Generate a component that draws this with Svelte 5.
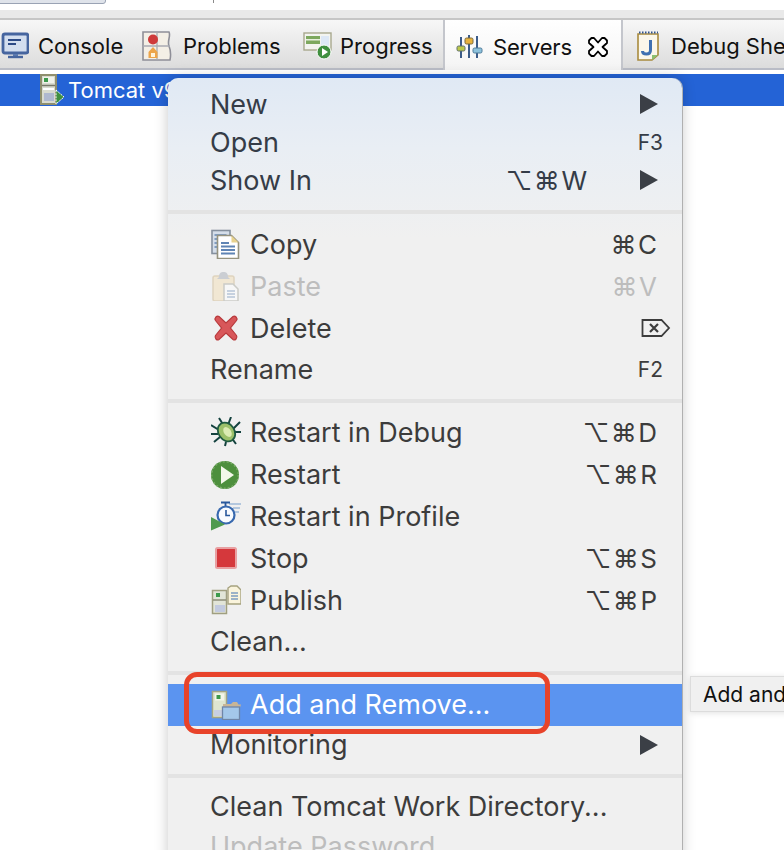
<script>
  const tabs = [
    { id: "console", label: "Console" },
    { id: "problems", label: "Problems" },
    { id: "progress", label: "Progress" },
    { id: "servers", label: "Servers", active: true },
    { id: "debug", label: "Debug Shell" },
  ];

  const groups = [
    [
      { label: "New", arrow: true },
      { label: "Open", fn: "F3" },
      { label: "Show In", keys: "⌥⌘W", arrow: true },
    ],
    [
      { label: "Copy", icon: "copy", keys: "⌘C" },
      { label: "Paste", icon: "paste", keys: "⌘V", off: true },
      { label: "Delete", icon: "delete", del: true },
      { label: "Rename", fn: "F2", tall: true },
    ],
    [
      { label: "Restart in Debug", icon: "bug", keys: "⌥⌘D" },
      { label: "Restart", icon: "restart", keys: "⌥⌘R" },
      { label: "Restart in Profile", icon: "profile" },
      { label: "Stop", icon: "stop", keys: "⌥⌘S" },
      { label: "Publish", icon: "publish", keys: "⌥⌘P" },
      { label: "Clean...", tall: true },
    ],
    [
      { label: "Add and Remove...", icon: "add", selected: true },
      { label: "Monitoring", arrow: true },
    ],
    [
      { label: "Clean Tomcat Work Directory..." },
      { label: "Update Password", off: true, low: true },
    ],
  ];
</script>

{#snippet icon(name)}
  <svg class="icon" width="30" height="30" viewBox="0 0 30 30">
    {#if name === "copy"}
      <rect x="1" y="1.500" width="18" height="23" fill="#d5deea" stroke="#85909e" stroke-width="1.600" />
      <path d="M3.500 6h12M3.500 10h12M3.500 14h8M3.500 18h8" stroke="#6488b4" stroke-width="1.600" />
      <path d="M6.500 6.500h14l7 7v16h-21z" fill="#fff" stroke="#96937f" stroke-width="1.600" />
      <path d="M20.500 6.500l7 7h-7z" fill="#e8d28e" />
      <path d="M10 14h8M10 17.500h14M10 21h14M10 24.500h14" stroke="#5f84b4" stroke-width="1.800" />
    {:else if name === "paste"}
      <g opacity="0.5">
        <rect x="2" y="5" width="21" height="25" rx="2" fill="#f2dfb8" stroke="#cfb98f" stroke-width="1.500" />
        <path d="M8 6c0-4 2-5 4.500-5S17 2 17 6l2 2H6z" fill="#a7adb8" />
        <path d="M13 13h9l5 5v12H13z" fill="#fff" stroke="#a8a9a0" stroke-width="1.500" />
        <path d="M16 20h8M16 23h8M16 26h8" stroke="#7d9cc0" stroke-width="1.500" />
      </g>
    {:else if name === "delete"}
      <path d="M8 3.500l7 6.500 7-6.500c2-1.500 5 1.500 3.500 4l-6 7.500 6 7.500c1.500 2.500-1.500 5.500-3.500 4l-7-6.500-7 6.500c-2 1.500-5-1.500-3.500-4l6-7.500-6-7.500C3 5 6 2 8 3.500z" fill="#d8575a" stroke="#b83a3c" stroke-width="1.200" />
    {:else if name === "bug"}
      <g stroke="#14423f" stroke-width="2" fill="none">
        <path d="M8 1l5 8M20 0l-3 8M0 8l8 5M29 5l-7 7M0 17h7M30 15h-7M3 25l6-5M25 27l-5-7M14 29l1-4" />
      </g>
      <ellipse cx="15.500" cy="15" rx="8" ry="10" transform="rotate(-35 15.500 15)" fill="#9cc06a" stroke="#1f5a40" stroke-width="1.800" />
      <ellipse cx="16.500" cy="15" rx="3.500" ry="5.500" transform="rotate(-35 16.500 15)" fill="#dcebb3" />
    {:else if name === "restart"}
      <circle cx="14" cy="16" r="14" fill="#4d8f3d" />
      <circle cx="14" cy="16" r="13.300" fill="none" stroke="#7bab68" stroke-width="1.400" stroke-dasharray="2 2" />
      <path d="M10 7l13 9-13 9z" fill="#f4f8ea" />
    {:else if name === "profile"}
      <path d="M18 3h12M22 7h7M24 11h4" stroke="#9fb9d8" stroke-width="1.300" />
      <path d="M10 1.500h9M14.500 2v4" stroke="#28589c" stroke-width="1.800" />
      <circle cx="15" cy="14" r="8.500" fill="#f8fbff" stroke="#3768ae" stroke-width="2.200" />
      <path d="M15 9v5.500h4" fill="none" stroke="#28589c" stroke-width="1.600" />
      <path d="M0 16l14 7.500-14 6z" fill="#4f9a4f" />
    {:else if name === "stop"}
      <rect x="5" y="5" width="20" height="20" rx="1.500" fill="#d5383c" stroke="#e8a0a2" stroke-width="2" />
    {:else if name === "publish"}
      <rect x="1.500" y="5.500" width="14" height="23" fill="#e2e5d8" stroke="#a09f80" stroke-width="1.500" />
      <rect x="5" y="8" width="4" height="4" fill="#3c9a4c" />
      <path d="M2 15h13" stroke="#8d8d78" stroke-width="1.500" />
      <rect x="4" y="20" width="10" height="7" fill="#c2cadf" />
      <path d="M17 3l3-2h6l4 4v14h-13z" fill="#faf4dc" stroke="#a6a27f" stroke-width="1.400" />
      <path d="M20 8h7M20 11h7M20 14h7" stroke="#7d9cc0" stroke-width="1.300" />
    {:else if name === "add"}
      <rect x="1.500" y="1.500" width="14" height="26" fill="#dfe6d0" stroke="#a3a583" stroke-width="1.500" />
      <rect x="4" y="3.500" width="9" height="7" fill="#f2f5ea" />
      <rect x="5.500" y="5" width="4" height="4" fill="#3c9a4c" />
      <rect x="3" y="20" width="11" height="6" fill="#c7cfe2" />
      <path d="M12 14h8l2-2h4l1.500 2.500H30l-1 3H12z" fill="#c8b596" />
      <rect x="11.500" y="17" width="17" height="12.500" fill="#a4c8ea" stroke="#6f86a8" stroke-width="1.300" />
    {/if}
  </svg>
{/snippet}

{#snippet tabIcon(id)}
  {#if id === "console"}
    <svg class="tab-icon" width="28" height="28" viewBox="0 0 28 28">
      <rect x="2" y="2" width="25" height="19" rx="2" fill="#d3deef" stroke="#46659f" stroke-width="2.800" />
      <path d="M7 8h13M7 12h8" stroke="#2c4a86" stroke-width="2" />
      <path d="M12 22h5v2h-5z" fill="#5d7bb0" />
      <path d="M7 25h15" stroke="#46659f" stroke-width="2.400" />
    </svg>
  {:else if id === "problems"}
    <svg class="tab-icon" width="30" height="30" viewBox="0 0 30 30">
      <path d="M1 1h26c2 4-2 9 0 14s2 9 1 14H1z" fill="#f4efe6" stroke="#8f8f98" stroke-width="1.600" />
      <path d="M1 15h27M15 1v28" stroke="#a9abb2" stroke-width="1.300" />
      <circle cx="11" cy="8.500" r="5" fill="#cf3a3a" />
      <path d="M11 16l4.500 5v6h-9v-6z" fill="#eda54a" />
      <rect x="9" y="22" width="4" height="4" fill="#fff4dc" />
    </svg>
  {:else if id === "progress"}
    <svg class="tab-icon" width="30" height="28" viewBox="0 0 30 28">
      <rect x="1" y="1" width="27" height="17" fill="#f3f4f0" stroke="#a8a88e" stroke-width="1.400" />
      <rect x="3" y="4" width="14" height="8" fill="#7da85e" />
      <rect x="3" y="7" width="14" height="1.500" fill="#e8f0de" />
      <rect x="18" y="4" width="8" height="10" fill="#dde8f6" />
      <circle cx="21" cy="20" r="7" fill="#3f8f3f" stroke="#fff" />
      <path d="M19 16l6 4-6 4z" fill="#fff" />
    </svg>
  {:else if id === "servers"}
    <svg class="tab-icon" width="28" height="26" viewBox="0 0 28 26">
      <path d="M5 3v21M13 1v23M21 2v22" stroke="#3b5b88" stroke-width="2" />
      <rect x="1" y="12" width="8" height="5" rx="1.500" fill="#bcc94a" stroke="#5f6e6e" />
      <rect x="9" y="4" width="8" height="6" rx="1.500" fill="#e7b23e" stroke="#7a6a3e" />
      <rect x="17" y="14" width="9" height="5" rx="1.500" fill="#8dc2dc" stroke="#4f7a98" />
    </svg>
  {:else}
    <svg class="tab-icon" width="24" height="30" viewBox="0 0 24 30">
      <path d="M2 3h20v21l-6 5H2z" fill="#fbf7ea" stroke="#a88a3e" stroke-width="1.600" />
      <path d="M16 29v-5h6z" fill="#8cc070" />
      <path d="M3 1.500h19" stroke="#33558c" stroke-width="2" stroke-dasharray="1.500 1.500" />
      <path d="M14.500 9v10c0 3-2 4-4 4s-4-1-4-3" fill="none" stroke="#3f70b0" stroke-width="3" />
    </svg>
  {/if}
{/snippet}

{#snippet closeX()}
  <svg class="close" width="22" height="22" viewBox="0 0 22 22">
    <path d="M2 4.500L4.500 2 7 2l4 4.500L15 2h2.500L20 4.500V7l-4.500 4 4.500 4v2.500L17.500 20H15l-4-4.500L7 20H4.500L2 17.500V15l4.500-4L2 7z" fill="#fff" stroke="#000" stroke-width="1.800" stroke-linejoin="round" />
  </svg>
{/snippet}

<div class="page">
  <div class="topstrip">
    <span class="old-btn"></span>
    <span class="old-tick"></span>
  </div>
  <div class="band"></div>

  <div class="tabbar">
    {#each tabs as tab}
      <div class="tab {tab.id}" class:active={tab.active}>
        {@render tabIcon(tab.id)}
        <span class="tab-label">{tab.label}</span>
        {#if tab.active}{@render closeX()}{/if}
      </div>
    {/each}
  </div>

  <div class="tree">
    <div class="tree-row">
      <svg class="tree-icon" width="26" height="32" viewBox="0 0 26 32">
        <rect x="1" y="1" width="15" height="29" fill="#d8dbd0" stroke="#8f8f6e" stroke-width="2" />
        <rect x="3" y="3" width="11" height="6" fill="#f0f2ea" />
        <rect x="4" y="4" width="4" height="4" fill="#3c9a4c" />
        <path d="M2 11.500h13" stroke="#77776a" stroke-width="1.500" />
        <rect x="3" y="14" width="11" height="2" fill="#fff" />
        <rect x="4" y="19" width="10" height="8" fill="#aeb8d0" />
        <path d="M16 16l8 7-8 7z" fill="#3f8f3f" stroke="#fff" stroke-dasharray="2 1" />
      </svg>
      <span class="tree-label">Tomcat v9.0 Server at localhost</span>
    </div>
  </div>

  <div class="menu">
    {#each groups as group, g}
      {#if g > 0}<div class="sep" class:tight={g === 2} class:tighter={g === 3 || g === 4}></div>{/if}
      {#each group as item}
        <div class="item" class:top={g === 0} class:off={item.off} class:selected={item.selected} class:has-icon={item.icon} class:tall={item.tall} class:low={item.low}>
          {#if item.icon}
            <span class="icon-cell">{@render icon(item.icon)}</span>
          {/if}
          <span class="label">{item.label}</span>
          {#if item.keys}
            <span class="keys" class:before-arrow={item.arrow}>{item.keys}</span>
          {/if}
          {#if item.fn}
            <span class="fn">{item.fn}</span>
          {/if}
          {#if item.del}
            <svg class="del" width="30" height="20" viewBox="0 0 30 20">
              <path d="M1.500 2h19l7.500 8-7.500 8h-19z" fill="none" stroke="#3c3c3c" stroke-width="1.800" />
              <path d="M9 6l8 8M17 6l-8 8" stroke="#3c3c3c" stroke-width="2.200" />
            </svg>
          {/if}
          {#if item.arrow}
            <svg class="arrow" width="18" height="20" viewBox="0 0 18 20">
              <path d="M0 0l18 10L0 20z" fill="#3b3f46" />
            </svg>
          {/if}
        </div>
      {/each}
    {/each}
  </div>

  <div class="redbox"></div>
  <div class="tooltip">Add and Remove...</div>
</div>

<style>
  :global(body) {
    margin: 0;
    background: #fff;
  }

  .page {
    position: relative;
    width: 784px;
    height: 850px;
    overflow: hidden;
    background: #fff;
    font-family: Inter, "Liberation Sans", sans-serif;
  }

  .topstrip {
    position: relative;
    height: 10px;
    background: #fff;
  }

  .old-btn {
    position: absolute;
    left: -4px;
    top: -6px;
    width: 108px;
    height: 8px;
    background: #dfe3ea;
    border: 1px solid #9aa3b4;
    border-radius: 3px;
  }

  .old-tick {
    position: absolute;
    left: 213px;
    top: 0;
    width: 1px;
    height: 3px;
    background: #8a8a8a;
  }

  .band {
    height: 8px;
    background: #e9e9e9;
    border-bottom: 2px solid #c6c6c6;
  }

  .tabbar {
    display: flex;
    height: 48px;
    background: linear-gradient(#f7f7f7, #dcdcdc);
    border-bottom: 2px solid #b9bcc6;
  }

  .tab {
    display: flex;
    align-items: center;
    box-sizing: border-box;
    padding-top: 3px;
    gap: 9px;
    font-size: 22px;
    color: #111;
    white-space: nowrap;
    flex-shrink: 0;
  }

  .tab.console { width: 136px; padding-left: 1px; }
  .tab.problems { width: 161px; padding-left: 6px; gap: 11px; }
  .tab.progress { width: 146px; padding-left: 6px; gap: 7px; }
  .tab.debug { padding-left: 13px; gap: 11px; }

  .tab.active {
    width: 180px;
    height: 50px;
    padding-left: 11px;
    background: linear-gradient(#fff, #f4f4f4);
    border-left: 2px solid #c4c6cc;
    border-right: 2px solid #c4c6cc;
  }

  .tab.servers .tab-label {
    letter-spacing: -0.2px;
  }

  .close {
    margin-left: 6px;
  }

  .tab-icon {
    flex-shrink: 0;
  }

  .tree {
    padding-top: 4px;
  }

  .tree-row {
    display: flex;
    align-items: center;
    height: 32px;
    padding-left: 40px;
    background: #2463d6;
    color: #fff;
    font-size: 22px;
    white-space: nowrap;
  }

  .tree-label {
    margin-left: 2px;
  }

  .menu {
    position: absolute;
    left: 168px;
    top: 78px;
    box-sizing: border-box;
    width: 514px;
    height: 800px;
    padding-top: 7px;
    background: linear-gradient(#e0e9f4 0, #e9eef4 70px, #f0f0f0 160px);
    border-radius: 10px 10px 0 0;
    box-shadow: 0 0 14px rgba(0, 0, 0, 0.22), 1px 0 0 #c4c4c4;
    color: #3c3c3c;
    font-size: 27px;
  }

  .item {
    display: flex;
    align-items: center;
    height: 38px;
    padding: 0 19px 0 42px;
    white-space: nowrap;
  }

  .item.top {
    color: #353c47;
  }

  .item.tall {
    height: 40px;
  }

  .item.has-icon {
    height: 42px;
  }

  .item.low {
    margin-top: 2px;
  }

  .item.off {
    color: #bdbdbd;
  }

  .icon-cell {
    display: flex;
    width: 39px;
    padding-left: 1px;
    flex-shrink: 0;
  }

  .icon {
    flex-shrink: 0;
  }

  .label {
    flex: 1;
  }

  .selected .label,
  .selected + .item .label {
    margin-top: -2px;
  }

  .keys {
    font-family: Inter, "DejaVu Sans", sans-serif;
    font-size: 26px;
    letter-spacing: 1.5px;
    margin-right: 4.500px;
  }

  .keys.before-arrow {
    margin-right: 51.500px;
  }

  .fn {
    font-size: 21px;
  }

  .arrow {
    margin-right: 5px;
  }

  .del {
    margin-right: -8px;
  }

  .selected {
    background: #5b94f0;
    color: #fff;
  }

  .sep {
    height: 4px;
    margin: 11px 0 9px;
    background: #e3e3e3;
  }

  .sep.tight {
    margin: 10px 0 8px;
  }

  .sep.tighter {
    margin: 10px 0 9px;
  }

  .redbox {
    position: absolute;
    left: 184px;
    top: 672px;
    box-sizing: border-box;
    width: 366px;
    height: 62px;
    border: 5px solid #e8432a;
    border-radius: 13px;
  }

  .tooltip {
    position: absolute;
    left: 690px;
    top: 676px;
    height: 36px;
    line-height: 36px;
    padding: 0 12px;
    background: #f0f0f0;
    border: 1px solid #dcdcdc;
    box-sizing: border-box;
    box-shadow: 0 1px 6px rgba(0, 0, 0, 0.12);
    color: #111;
    font-size: 21px;
    white-space: nowrap;
  }
</style>
